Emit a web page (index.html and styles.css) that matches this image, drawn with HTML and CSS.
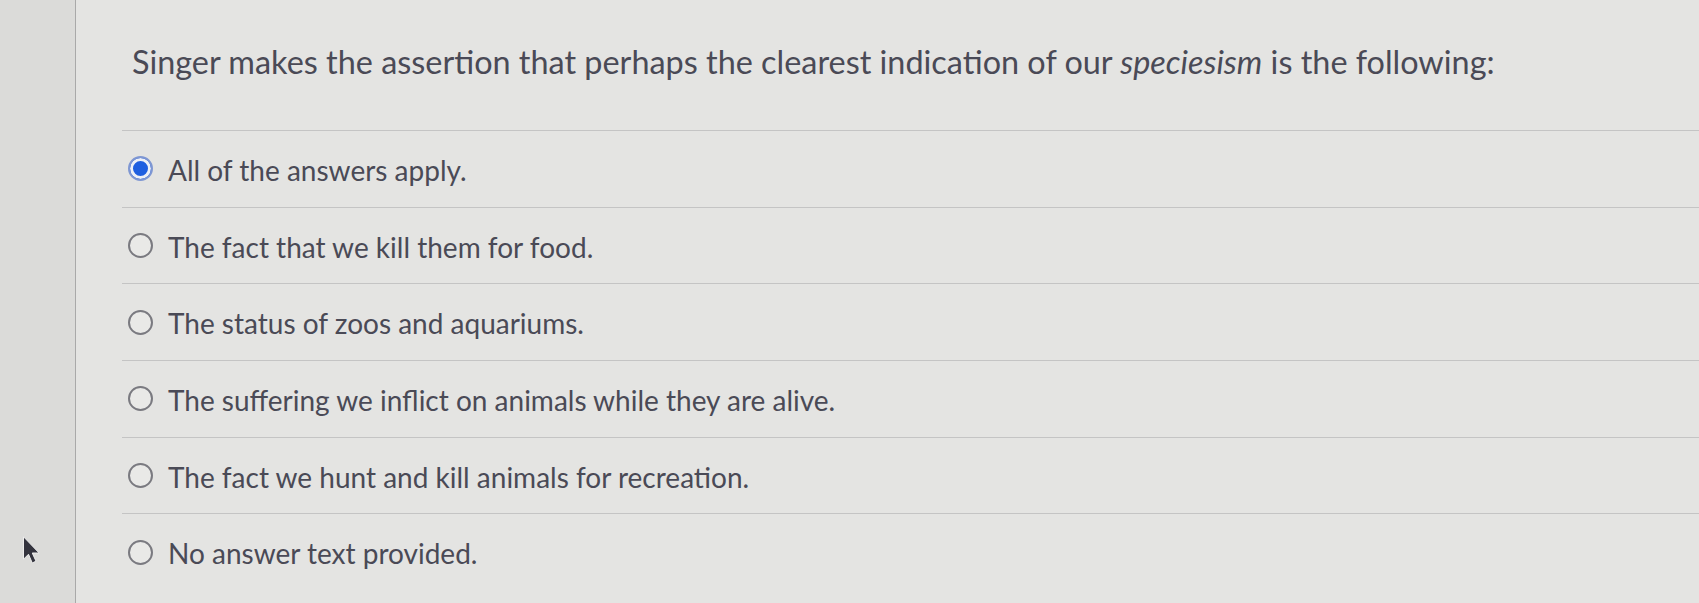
FILE: index.html
```html
<!DOCTYPE html>
<html lang="en">
<head>
<meta charset="utf-8">
<title>Quiz question</title>
<link rel="stylesheet" href="styles.css">
</head>
<body>
<div class="page">
  <aside class="sidebar"></aside>
  <main class="content">
    <div class="question">
      <p class="prompt">Singer makes the assertion that perhaps the clearest indication of our <em>speciesism</em> is the following:</p>
      <ul class="answers">
        <li class="answer">
          <span class="radio selected"></span>
          <span class="label">All of the answers apply.</span>
        </li>
        <li class="answer">
          <span class="radio"></span>
          <span class="label">The fact that we kill them for food.</span>
        </li>
        <li class="answer">
          <span class="radio"></span>
          <span class="label">The status of zoos and aquariums.</span>
        </li>
        <li class="answer">
          <span class="radio"></span>
          <span class="label">The suffering we inflict on animals while they are alive.</span>
        </li>
        <li class="answer">
          <span class="radio"></span>
          <span class="label">The fact we hunt and kill animals for recreation.</span>
        </li>
        <li class="answer">
          <span class="radio"></span>
          <span class="label">No answer text provided.</span>
        </li>
      </ul>
    </div>
  </main>
  <svg class="cursor" width="20" height="31" viewBox="0 0 16 24" aria-hidden="true">
    <path d="M2 1 L2 19 L6 15 L9 22 L12 20.5 L9 14 L14.5 14 Z" fill="#33333d" stroke="#ececec" stroke-width="0.8"/>
  </svg>
</div>
</body>
</html>
```

FILE: styles.css
```css
* { box-sizing: border-box; }

html, body {
  margin: 0;
  padding: 0;
  height: 100%;
  overflow: hidden;
}

body {
  background: #e4e4e2;
  font-family: Lato, "Open Sans", "Liberation Sans", sans-serif;
  color: #4a4a56;
}

.page {
  display: flex;
  height: 603px;
  position: relative;
}

.sidebar {
  width: 76px;
  flex: none;
  background: #dbdbd9;
  border-right: 1px solid #a9a9a9;
}

.content {
  flex: 1;
  padding-left: 46px;
  padding-top: 43px;
}

.prompt {
  margin: 0 0 49px 10px;
  font-size: 32.4px;
  line-height: 38px;
}

.prompt em {
  font-style: italic;
}

.answers {
  list-style: none;
  margin: 0;
  padding: 0;
}

.answer {
  height: 76.7px;
  border-top: 1px solid #c4c4c4;
  display: flex;
  align-items: center;
  gap: 15px;
  padding-left: 6px;
}

.radio {
  width: 25px;
  height: 25px;
  border-radius: 50%;
  border: 2px solid #7a7a80;
  background: #e9e9e7;
  flex: none;
}

.radio.selected {
  border: 2px solid #7f97d2;
  background: #1f5fe0;
  box-shadow: inset 0 0 0 3px #eef0f6;
}

.label {
  font-size: 28px;
  line-height: 34px;
  position: relative;
  top: 1px;
}

.cursor {
  position: absolute;
  left: 21px;
  top: 535px;
}
```
